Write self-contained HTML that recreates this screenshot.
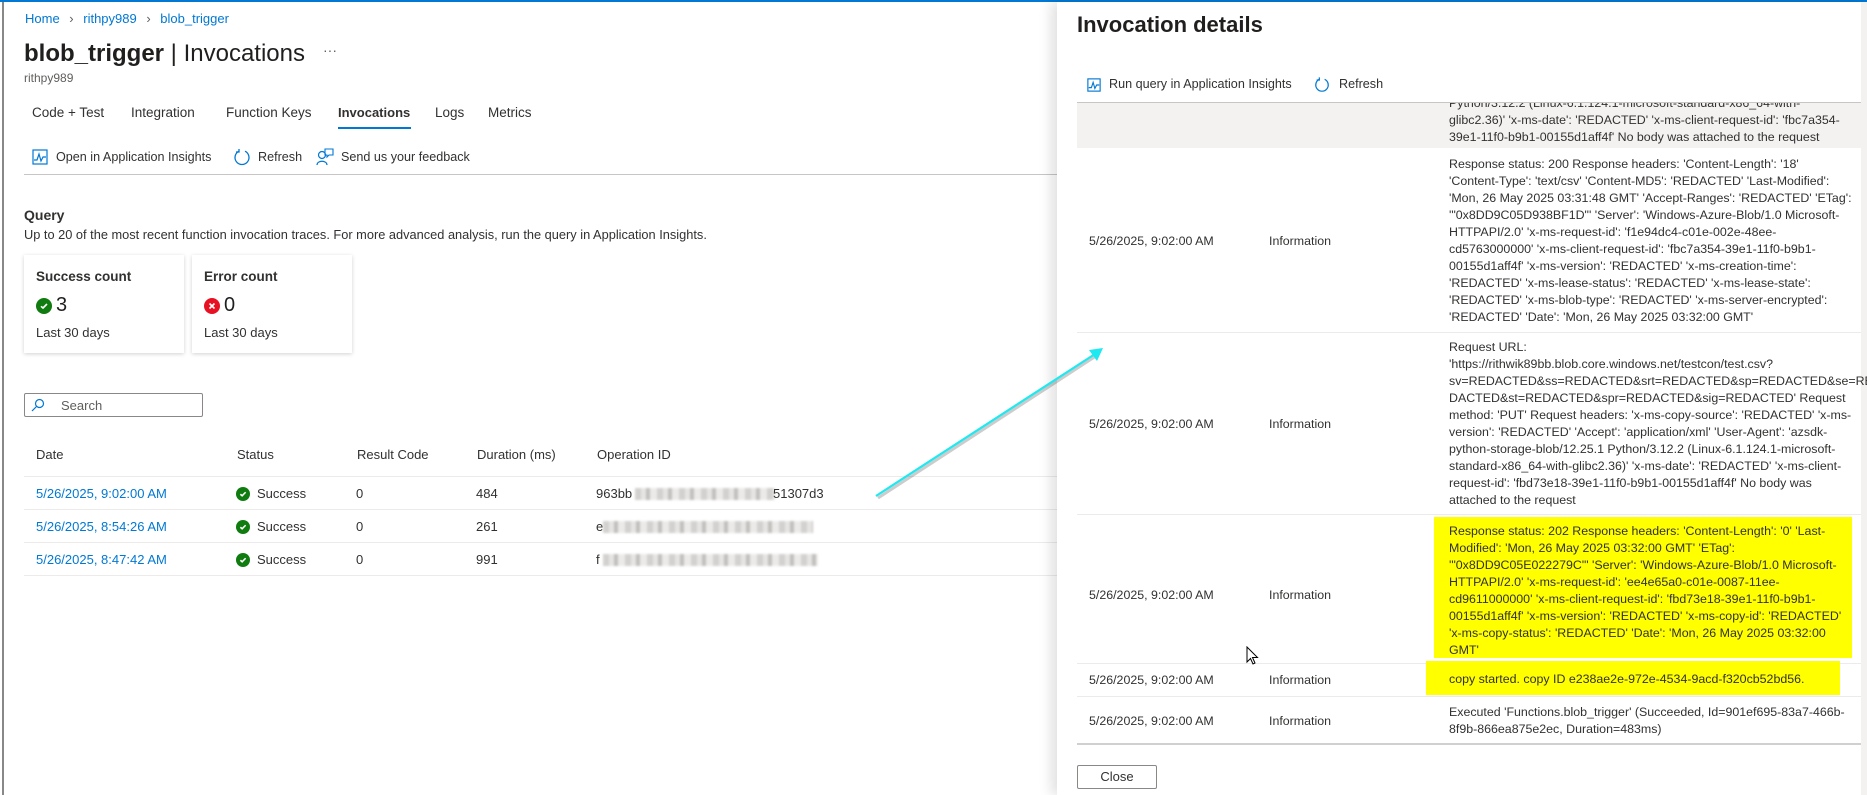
<!DOCTYPE html>
<html><head><meta charset="utf-8">
<style>
*{margin:0;padding:0;box-sizing:border-box}
body{width:1867px;height:795px;position:relative;overflow:hidden;background:#fff;font-family:"Liberation Sans",Arial,sans-serif;color:#323130}
.a{position:absolute;white-space:nowrap}
.l{font-size:13.5px;color:#323130}
.hl{position:absolute;left:24px;width:1040px;height:1px;background:#edebe9}
.blur{position:absolute;height:12px;background:repeating-linear-gradient(90deg,#c8c6c4 0 6px,#e1dfdd 6px 11px,#b3b0ad 11px 15px,#e8e6e4 15px 22px);opacity:.8;filter:blur(1px)}
.p{font-size:12.4px;color:#323130;line-height:17px}
.pl{position:absolute;left:1077px;width:784px;height:1px;background:#edebe9}
</style></head><body>
<div class="a" style="left:0;top:0;width:1867px;height:2px;background:#0078d4"></div>
<div class="a" style="left:2px;top:2px;width:2px;height:793px;background:#8a8886"></div>

<div class="a" style="left:25px;top:11px;font-size:13px;color:#0078d4">Home <span style="color:#605e5c;margin:0 6px">&#8250;</span> rithpy989 <span style="color:#605e5c;margin:0 6px">&#8250;</span> blob_trigger</div>
<div class="a" style="left:24px;top:40px;font-size:24px;color:#201f1e"><b>blob_trigger</b> | Invocations</div>
<div class="a" style="left:323px;top:42px;font-size:14px;color:#605e5c">&middot;&middot;&middot;</div>
<div class="a" style="left:24px;top:71px;font-size:12px;color:#605e5c">rithpy989</div>

<div class="a l" style="left:32px;top:105px">Code + Test</div>
<div class="a l" style="left:131px;top:105px">Integration</div>
<div class="a l" style="left:226px;top:105px">Function Keys</div>
<div class="a l" style="left:338px;top:105px;font-weight:bold;font-size:13px">Invocations</div>
<div class="a" style="left:338px;top:127px;width:73px;height:2px;background:#0078d4"></div>
<div class="a l" style="left:435px;top:105px">Logs</div>
<div class="a l" style="left:488px;top:105px">Metrics</div>

<svg class="a" style="left:32px;top:149px" width="16" height="16" viewBox="0 0 16 16"><rect x="1" y="1" width="14" height="14" fill="none" stroke="#0078d4" stroke-width="1.2"/><path d="M2 11 L5 11 L7 5 L9 12 L11 8 L14 8" fill="none" stroke="#0078d4" stroke-width="1.2"/></svg>
<div class="a" style="left:56px;top:150px;font-size:12.6px">Open in Application Insights</div>
<svg class="a" style="left:233px;top:148px" width="18" height="18" viewBox="0 0 18 18"><path d="M6 3.2 A7 7 0 1 0 12 3.2" fill="none" stroke="#0078d4" stroke-width="1.3"/><path d="M6 1 L6 4 L3 4" fill="none" stroke="#0078d4" stroke-width="1.3"/></svg>
<div class="a" style="left:258px;top:150px;font-size:12.6px">Refresh</div>
<svg class="a" style="left:316px;top:148px" width="18" height="18" viewBox="0 0 18 18"><circle cx="6" cy="7" r="3.5" fill="none" stroke="#0078d4" stroke-width="1.2"/><path d="M1 17 C1 12 11 12 11 17" fill="none" stroke="#0078d4" stroke-width="1.2"/><path d="M9 1 H17 V7 H13 L11 9 V7 H9 Z" fill="none" stroke="#0078d4" stroke-width="1.1"/></svg>
<div class="a" style="left:341px;top:150px;font-size:12.6px">Send us your feedback</div>
<div class="a" style="left:24px;top:174px;width:1040px;height:1px;background:#c8c6c4"></div>

<div class="a" style="left:24px;top:207px;font-size:14px;font-weight:bold;color:#323130">Query</div>
<div class="a" style="left:24px;top:227px;font-size:12.8px">Up to 20 of the most recent function invocation traces. For more advanced analysis, run the query in Application Insights.</div>

<div class="a" style="left:24px;top:255px;width:160px;height:98px;background:#fff;box-shadow:0 1px 4px rgba(0,0,0,.18)"></div>
<div class="a" style="left:192px;top:255px;width:160px;height:98px;background:#fff;box-shadow:0 1px 4px rgba(0,0,0,.18)"></div>
<div class="a" style="left:36px;top:269px;font-size:13.5px;font-weight:bold;color:#323130">Success count</div>
<div class="a" style="left:204px;top:269px;font-size:13.5px;font-weight:bold;color:#323130">Error count</div>
<svg class="a" style="left:36px;top:298px" width="16" height="16" viewBox="0 0 16 16"><circle cx="8" cy="8" r="8" fill="#107c10"/><path d="M5 8.3 L7 10 L11 6" fill="none" stroke="#fff" stroke-width="1.6"/></svg>
<div class="a" style="left:56px;top:294px;font-size:20px;color:#201f1e">3</div>
<svg class="a" style="left:204px;top:298px" width="16" height="16" viewBox="0 0 16 16"><circle cx="8" cy="8" r="8" fill="#e81123"/><path d="M5.5 5.5 L10.5 10.5 M10.5 5.5 L5.5 10.5" stroke="#fff" stroke-width="1.6"/></svg>
<div class="a" style="left:224px;top:294px;font-size:20px;color:#201f1e">0</div>
<div class="a" style="left:36px;top:325px;font-size:13px">Last 30 days</div>
<div class="a" style="left:204px;top:325px;font-size:13px">Last 30 days</div>

<div class="a" style="left:24px;top:393px;width:179px;height:24px;border:1px solid #8a8886;border-radius:2px"></div>
<svg class="a" style="left:31px;top:398px" width="14" height="14" viewBox="0 0 14 14"><circle cx="8.5" cy="5.5" r="4" fill="none" stroke="#0078d4" stroke-width="1.2"/><path d="M5.5 8.5 L1 13" stroke="#0078d4" stroke-width="1.2"/></svg>
<div class="a" style="left:61px;top:398px;font-size:13px;color:#605e5c">Search</div>

<div class="a" style="left:36px;top:447px;font-size:13px">Date</div>
<div class="a" style="left:237px;top:447px;font-size:13px">Status</div>
<div class="a" style="left:357px;top:447px;font-size:13px">Result Code</div>
<div class="a" style="left:477px;top:447px;font-size:13px">Duration (ms)</div>
<div class="a" style="left:597px;top:447px;font-size:13px">Operation ID</div>
<div class="hl" style="top:476px"></div><div class="hl" style="top:509px"></div><div class="hl" style="top:542px"></div><div class="hl" style="top:575px"></div>

<div class="a" style="left:36px;top:486px;font-size:13px;color:#0078d4">5/26/2025, 9:02:00 AM</div>
<div class="a" style="left:36px;top:519px;font-size:13px;color:#0078d4">5/26/2025, 8:54:26 AM</div>
<div class="a" style="left:36px;top:552px;font-size:13px;color:#0078d4">5/26/2025, 8:47:42 AM</div>
<svg class="a" style="left:236px;top:487px" width="14" height="14" viewBox="0 0 16 16"><circle cx="8" cy="8" r="8" fill="#107c10"/><path d="M5 8.3 L7 10 L11 6" fill="none" stroke="#fff" stroke-width="1.8"/></svg>
<svg class="a" style="left:236px;top:520px" width="14" height="14" viewBox="0 0 16 16"><circle cx="8" cy="8" r="8" fill="#107c10"/><path d="M5 8.3 L7 10 L11 6" fill="none" stroke="#fff" stroke-width="1.8"/></svg>
<svg class="a" style="left:236px;top:553px" width="14" height="14" viewBox="0 0 16 16"><circle cx="8" cy="8" r="8" fill="#107c10"/><path d="M5 8.3 L7 10 L11 6" fill="none" stroke="#fff" stroke-width="1.8"/></svg>
<div class="a" style="left:257px;top:486px;font-size:13px">Success</div>
<div class="a" style="left:257px;top:519px;font-size:13px">Success</div>
<div class="a" style="left:257px;top:552px;font-size:13px">Success</div>
<div class="a" style="left:356px;top:486px;font-size:13px">0</div>
<div class="a" style="left:356px;top:519px;font-size:13px">0</div>
<div class="a" style="left:356px;top:552px;font-size:13px">0</div>
<div class="a" style="left:476px;top:486px;font-size:13px">484</div>
<div class="a" style="left:476px;top:519px;font-size:13px">261</div>
<div class="a" style="left:476px;top:552px;font-size:13px">991</div>
<div class="a" style="left:596px;top:486px;font-size:13px">963bb</div>
<div class="blur" style="left:635px;top:488px;width:140px"></div>
<div class="a" style="left:773px;top:486px;font-size:13px">51307d3</div>
<div class="a" style="left:596px;top:519px;font-size:13px">e</div>
<div class="blur" style="left:603px;top:521px;width:210px"></div>
<div class="a" style="left:596px;top:552px;font-size:13px">f</div>
<div class="blur" style="left:603px;top:554px;width:215px"></div>

<!-- panel -->
<div class="a" style="left:1057px;top:2px;width:810px;height:793px;background:#fff;box-shadow:-6px 0 12px rgba(0,0,0,.12)"></div>
<div class="a" style="left:1861px;top:2px;width:6px;height:793px;background:#f3f2f1"></div>
<div class="a" style="left:1077px;top:12px;font-size:22px;font-weight:bold;color:#201f1e">Invocation details</div>
<svg class="a" style="left:1087px;top:78px" width="14" height="14" viewBox="0 0 16 16"><rect x="1" y="1" width="14" height="14" fill="none" stroke="#0078d4" stroke-width="1.3"/><path d="M2 11 L5 11 L7 5 L9 12 L11 8 L14 8" fill="none" stroke="#0078d4" stroke-width="1.3"/></svg>
<div class="a" style="left:1109px;top:77px;font-size:12.6px">Run query in Application Insights</div>
<svg class="a" style="left:1314px;top:76px" width="16" height="17" viewBox="0 0 18 18"><path d="M6 3.2 A7 7 0 1 0 12 3.2" fill="none" stroke="#0078d4" stroke-width="1.4"/><path d="M6 1 L6 4 L3 4" fill="none" stroke="#0078d4" stroke-width="1.4"/></svg>
<div class="a" style="left:1339px;top:77px;font-size:12.6px">Refresh</div>

<div class="a" style="left:1077px;top:102px;width:784px;height:46px;background:#f3f2f1;border-top:1px solid #c8c6c4;overflow:hidden">
 <div class="a p" style="left:372px;top:-8px">Python/3.12.2 (Linux-6.1.124.1-microsoft-standard-x86_64-with-<br>glibc2.36)' 'x-ms-date': 'REDACTED' 'x-ms-client-request-id': 'fbc7a354-<br>39e1-11f0-b9b1-00155d1aff4f' No body was attached to the request</div>
</div>

<div class="a p" style="left:1449px;top:156px">Response status: 200 Response headers: 'Content-Length': '18'<br>'Content-Type': 'text/csv' 'Content-MD5': 'REDACTED' 'Last-Modified':<br>'Mon, 26 May 2025 03:31:48 GMT' 'Accept-Ranges': 'REDACTED' 'ETag':<br>'"0x8DD9C05D938BF1D"' 'Server': 'Windows-Azure-Blob/1.0 Microsoft-<br>HTTPAPI/2.0' 'x-ms-request-id': 'f1e94dc4-c01e-002e-48ee-<br>cd5763000000' 'x-ms-client-request-id': 'fbc7a354-39e1-11f0-b9b1-<br>00155d1aff4f' 'x-ms-version': 'REDACTED' 'x-ms-creation-time':<br>'REDACTED' 'x-ms-lease-status': 'REDACTED' 'x-ms-lease-state':<br>'REDACTED' 'x-ms-blob-type': 'REDACTED' 'x-ms-server-encrypted':<br>'REDACTED' 'Date': 'Mon, 26 May 2025 03:32:00 GMT'</div>
<div class="a p" style="left:1089px;top:233px">5/26/2025, 9:02:00 AM</div><div class="a p" style="left:1269px;top:233px">Information</div>
<div class="pl" style="top:332px"></div>

<div class="a p" style="left:1449px;top:339px">Request URL:<br>'https://rithwik89bb.blob.core.windows.net/testcon/test.csv?<br>sv=REDACTED&amp;ss=REDACTED&amp;srt=REDACTED&amp;sp=REDACTED&amp;se=RE<br>DACTED&amp;st=REDACTED&amp;spr=REDACTED&amp;sig=REDACTED' Request<br>method: 'PUT' Request headers: 'x-ms-copy-source': 'REDACTED' 'x-ms-<br>version': 'REDACTED' 'Accept': 'application/xml' 'User-Agent': 'azsdk-<br>python-storage-blob/12.25.1 Python/3.12.2 (Linux-6.1.124.1-microsoft-<br>standard-x86_64-with-glibc2.36)' 'x-ms-date': 'REDACTED' 'x-ms-client-<br>request-id': 'fbd73e18-39e1-11f0-b9b1-00155d1aff4f' No body was<br>attached to the request</div>
<div class="a p" style="left:1089px;top:416px">5/26/2025, 9:02:00 AM</div><div class="a p" style="left:1269px;top:416px">Information</div>
<div class="pl" style="top:514px"></div>

<div class="a" style="left:1434px;top:517px;width:418px;height:141px;background:#ffff00"></div>
<div class="a p" style="left:1449px;top:523px">Response status: 202 Response headers: 'Content-Length': '0' 'Last-<br>Modified': 'Mon, 26 May 2025 03:32:00 GMT' 'ETag':<br>'"0x8DD9C05E022279C"' 'Server': 'Windows-Azure-Blob/1.0 Microsoft-<br>HTTPAPI/2.0' 'x-ms-request-id': 'ee4e65a0-c01e-0087-11ee-<br>cd9611000000' 'x-ms-client-request-id': 'fbd73e18-39e1-11f0-b9b1-<br>00155d1aff4f' 'x-ms-version': 'REDACTED' 'x-ms-copy-id': 'REDACTED'<br>'x-ms-copy-status': 'REDACTED' 'Date': 'Mon, 26 May 2025 03:32:00<br>GMT'</div>
<div class="a p" style="left:1089px;top:587px">5/26/2025, 9:02:00 AM</div><div class="a p" style="left:1269px;top:587px">Information</div>
<div class="pl" style="top:663px"></div>

<div class="a" style="left:1426px;top:661px;width:414px;height:34px;background:#ffff00"></div>
<div class="a p" style="left:1449px;top:671px">copy started. copy ID e238ae2e-972e-4534-9acd-f320cb52bd56.</div>
<div class="a p" style="left:1089px;top:672px">5/26/2025, 9:02:00 AM</div><div class="a p" style="left:1269px;top:672px">Information</div>
<div class="pl" style="top:696px"></div>

<div class="a p" style="left:1449px;top:704px">Executed 'Functions.blob_trigger' (Succeeded, Id=901ef695-83a7-466b-<br>8f9b-866ea875e2ec, Duration=483ms)</div>
<div class="a p" style="left:1089px;top:713px">5/26/2025, 9:02:00 AM</div><div class="a p" style="left:1269px;top:713px">Information</div>
<div class="a" style="left:1077px;top:743px;width:784px;height:2px;background:#d2d0ce"></div>

<svg class="a" style="left:1246px;top:646px" width="14" height="20" viewBox="0 0 14 20"><path d="M1 1 L1 16 L4.5 12.5 L7 18 L9 17 L6.5 11.5 L11.5 11.5 Z" fill="#fff" stroke="#000" stroke-width="1"/></svg>

<div class="a" style="left:1077px;top:765px;width:80px;height:24px;border:1px solid #8a8886;border-radius:2px;font-size:13px;text-align:center;line-height:22px;color:#323130">Close</div>

<!-- arrow on top -->
<svg class="a" style="left:0;top:0" width="1867" height="795"><line x1="878" y1="498" x2="1096" y2="356" stroke="rgba(0,0,0,.2)" stroke-width="3"/><line x1="876" y1="496" x2="1095" y2="354" stroke="#1ee8f0" stroke-width="2.2"/><polygon points="1103,348 1089,350 1097,361" fill="#1ee8f0"/></svg>
</body></html>
